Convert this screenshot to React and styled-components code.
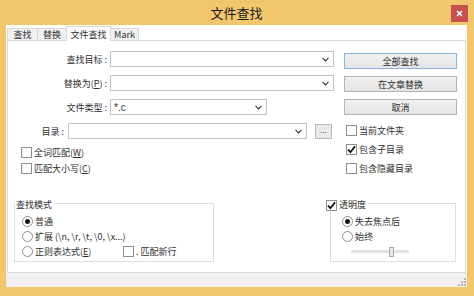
import React from 'react';
import styled, { createGlobalStyle } from 'styled-components';

const GlobalStyle = createGlobalStyle`
    html, body {
        margin: 0;
        padding: 0;
    }
    body {
        font-family: "Noto Sans CJK SC", "Liberation Sans", sans-serif;
        font-size: 9px;
        color: #2e2e2e;
    }
    * {
        box-sizing: border-box;
    }
`

const Window = styled.div`
    width: 474px;
    height: 296px;
    display: flex;
    flex-direction: column;
    padding: 0 7px 9px 6px;
    background: #f2c66d;
`

const TitleBar = styled.div`
    height: 25px;
    display: grid;
    grid-template-columns: 1fr auto 1fr;
    align-items: start;
`

const Title = styled.div`
    grid-column: 2;
    font-size: 13px;
    line-height: 25px;
    color: #1a1a1a;
`

const CloseButton = styled.div`
    grid-column: 3;
    justify-self: end;
    margin: 5px -1px 0 0;
    width: 17px;
    height: 17px;
    display: flex;
    align-items: center;
    justify-content: center;
    background: #c75050;
`

const Client = styled.div`
    flex: 1;
    display: flex;
    flex-direction: column;
    background: #ffffff;
`

const TabStrip = styled.div`
    height: 15px;
    display: flex;
    align-items: flex-end;
    padding-left: 1px;
    position: relative;
    z-index: 1;
`

const Tab = styled.div`
    width: ${(props) => props.$w}px;
    height: ${(props) => (props.$active ? 15 : 12)}px;
    margin-bottom: ${(props) => (props.$active ? -1 : 0)}px;
    margin-left: ${(props) => (props.$first ? 0 : -1)}px;
    display: flex;
    align-items: center;
    justify-content: center;
    background: ${(props) => (props.$active ? '#ffffff' : '#f0f0f0')};
    border: 1px solid #d9d9d9;
    border-bottom: none;
    line-height: 11px;
`

const Panel = styled.div`
    height: 233px;
    margin: 0 1px;
    border: 1px solid #d9d9d9;
    display: flex;
    flex-direction: column;
`

const TopArea = styled.div`
    display: flex;
`

const LeftForm = styled.div`
    width: 326px;
    display: flex;
    flex-direction: column;
`

const FieldList = styled.div`
    display: flex;
    flex-direction: column;
    gap: 8px;
    padding-top: 10px;
`

const FieldRow = styled.div`
    height: 16px;
    display: flex;
    align-items: center;
`

const FieldLabel = styled.div`
    width: ${(props) => props.$w}px;
    padding-right: 1px;
    text-align: right;
    white-space: nowrap;
`

const Combo = styled.div`
    width: ${(props) => props.$w}px;
    height: 16px;
    margin-left: ${(props) => props.$gap}px;
    display: flex;
    align-items: center;
    padding-left: 3px;
    border: 1px solid #c4c4c4;
    background: #ffffff;
`

const ComboText = styled.span`
    flex: 1;
    font-family: "Liberation Sans", sans-serif;
    font-size: 10px;
`

const Chevron = styled.svg`
    margin-right: 4px;
    flex-shrink: 0;
`

const BrowseButton = styled.div`
    width: 17px;
    height: 15px;
    margin-left: 8px;
    display: flex;
    align-items: center;
    justify-content: center;
    padding-bottom: 3px;
    border: 1px solid #b9b9b9;
    background: #e9e9e9;
    color: #555;
    font-size: 8px;
`

const LeftChecks = styled.div`
    margin-top: 5px;
    padding-left: 13px;
    display: flex;
    flex-direction: column;
`

const RightCol = styled.div`
    width: 113px;
    margin-left: 10px;
    padding-top: 12px;
    display: flex;
    flex-direction: column;
`

const ButtonStack = styled.div`
    display: flex;
    flex-direction: column;
    gap: 7px;
`

const Button = styled.div`
    height: 16px;
    display: flex;
    align-items: center;
    justify-content: center;
    border: 1px solid ${(props) => (props.$default ? '#86b4e3' : '#b4b4b4')};
    background: linear-gradient(#f0f0f0, #e4e4e4);
`

const RightChecks = styled.div`
    margin-top: 6px;
    padding-left: 2px;
    display: flex;
    flex-direction: column;
`

const CheckRow = styled.div`
    height: ${(props) => props.$h}px;
    display: flex;
    align-items: center;
    gap: 2px;
    white-space: nowrap;
`

const Box = styled.div`
    width: 11px;
    height: 11px;
    flex-shrink: 0;
    display: flex;
    align-items: center;
    justify-content: center;
    border: 1px solid #8f8f8f;
    background: #ffffff;
`

const Circle = styled.div`
    width: 11px;
    height: 11px;
    flex-shrink: 0;
    display: flex;
    align-items: center;
    justify-content: center;
    border: 1px solid #8f8f8f;
    border-radius: 50%;
    background: #ffffff;
`

const Dot = styled.div`
    width: 5px;
    height: 5px;
    border-radius: 50%;
    background: #1a1a1a;
`

const BottomArea = styled.div`
    margin-top: auto;
    display: flex;
    align-items: flex-end;
    justify-content: space-between;
    padding: 0 9px 10px 6px;
`

const Group = styled.fieldset`
    width: ${(props) => props.$w}px;
    margin: 0;
    padding: 0 0 2px 0;
    border: 1px solid #dedede;
`

const Legend = styled.legend`
    padding: 4px 2px 0 1px;
    margin-left: ${(props) => props.$shift || 0}px;
    line-height: 12px;
    display: flex;
    align-items: center;
    gap: 2px;
`

const GroupBody = styled.div`
    margin-top: 3px;
    padding-left: ${(props) => props.$pad}px;
    display: flex;
    flex-direction: column;
`

const RadioRow = styled.div`
    height: 15px;
    display: flex;
    align-items: center;
    white-space: nowrap;
`

const RadioItem = styled.div`
    display: flex;
    align-items: center;
    gap: 2px;
    width: ${(props) => (props.$w ? `${props.$w}px` : 'auto')};
`

const Slider = styled.div`
    height: 15px;
    margin-left: 9px;
    display: flex;
    align-items: center;
`

const SliderLine = styled.div`
    width: ${(props) => props.$w}px;
    height: 3px;
    background: #e2e2e2;
`

const SliderThumb = styled.div`
    width: 5px;
    height: 10px;
    border: 1px solid #a9a9a9;
    background: #eaeaea;
`

const StatusBar = styled.div`
    flex: 1;
    display: flex;
    align-items: flex-end;
    justify-content: flex-end;
    background: #f0f0f0;
`

const ChevronIcon = () => (
    <Chevron width="7" height="5" viewBox="0 0 7 5">
        <path d="M0.5 0.8 L3.5 3.8 L6.5 0.8" fill="none" stroke="#3a3a3a" strokeWidth="1.2" />
    </Chevron>
)

const Checkbox = ({checked}) => (
    <Box>
        {checked && (
            <svg width="9" height="9" viewBox="0 0 9 9">
                <path d="M1 4.6 L3.4 7.2 L8 1.4" fill="none" stroke="#111" strokeWidth="1.7" />
            </svg>
        )}
    </Box>
)

const Radio = ({checked, children, w}) => (
    <RadioItem $w={w}>
        <Circle>{checked && <Dot />}</Circle>
        <span>{children}</span>
    </RadioItem>
)

const App = () => {
    return (
        <>
            <GlobalStyle />
            <Window>
                <TitleBar>
                    <Title>文件查找</Title>
                    <CloseButton>
                        <svg width="7" height="7" viewBox="0 0 7 7">
                            <path d="M1 1 L6 6 M6 1 L1 6" stroke="#ffffff" strokeWidth="1.6" />
                        </svg>
                    </CloseButton>
                </TitleBar>
                <Client>
                    <TabStrip>
                        <Tab $w={31} $first>查找</Tab>
                        <Tab $w={30}>替换</Tab>
                        <Tab $w={45} $active>文件查找</Tab>
                        <Tab $w={29}>Mark</Tab>
                    </TabStrip>
                    <Panel>
                        <TopArea>
                            <LeftForm>
                                <FieldList>
                                    <FieldRow>
                                        <FieldLabel $w={100}>查找目标 :</FieldLabel>
                                        <Combo $w={224} $gap={2}>
                                            <ComboText />
                                            <ChevronIcon />
                                        </Combo>
                                    </FieldRow>
                                    <FieldRow>
                                        <FieldLabel $w={100}>替换为(<u>P</u>) :</FieldLabel>
                                        <Combo $w={224} $gap={2}>
                                            <ComboText />
                                            <ChevronIcon />
                                        </Combo>
                                    </FieldRow>
                                    <FieldRow>
                                        <FieldLabel $w={100}>文件类型 :</FieldLabel>
                                        <Combo $w={157} $gap={2}>
                                            <ComboText>*.c</ComboText>
                                            <ChevronIcon />
                                        </Combo>
                                    </FieldRow>
                                    <FieldRow>
                                        <FieldLabel $w={57}>目录 :</FieldLabel>
                                        <Combo $w={239} $gap={3}>
                                            <ComboText />
                                            <ChevronIcon />
                                        </Combo>
                                        <BrowseButton>...</BrowseButton>
                                    </FieldRow>
                                </FieldList>
                                <LeftChecks>
                                    <CheckRow $h={16}>
                                        <Checkbox />
                                        <span>全词匹配(<u>W</u>)</span>
                                    </CheckRow>
                                    <CheckRow $h={16}>
                                        <Checkbox />
                                        <span>匹配大小写(<u>C</u>)</span>
                                    </CheckRow>
                                </LeftChecks>
                            </LeftForm>
                            <RightCol>
                                <ButtonStack>
                                    <Button $default>全部查找</Button>
                                    <Button>在文章替换</Button>
                                    <Button>取消</Button>
                                </ButtonStack>
                                <RightChecks>
                                    <CheckRow $h={19}>
                                        <Checkbox />
                                        <span>当前文件夹</span>
                                    </CheckRow>
                                    <CheckRow $h={19}>
                                        <Checkbox checked />
                                        <span>包含子目录</span>
                                    </CheckRow>
                                    <CheckRow $h={19}>
                                        <Checkbox />
                                        <span>包含隐藏目录</span>
                                    </CheckRow>
                                </RightChecks>
                            </RightCol>
                        </TopArea>
                        <BottomArea>
                            <Group $w={200}>
                                <Legend>查找模式</Legend>
                                <GroupBody $pad={7}>
                                    <RadioRow>
                                        <Radio checked>普通</Radio>
                                    </RadioRow>
                                    <RadioRow>
                                        <Radio>扩展 (\n, \r, \t, \0, \x...)</Radio>
                                    </RadioRow>
                                    <RadioRow>
                                        <Radio w={101}>正则表达式(<u>E</u>)</Radio>
                                        <CheckRow $h={15}>
                                            <Checkbox />
                                            <span>. 匹配新行</span>
                                        </CheckRow>
                                    </RadioRow>
                                </GroupBody>
                            </Group>
                            <Group $w={126}>
                                <Legend $shift={-6}>
                                    <Checkbox checked />
                                    <span>透明度</span>
                                </Legend>
                                <GroupBody $pad={11}>
                                    <RadioRow>
                                        <Radio checked>失去焦点后</Radio>
                                    </RadioRow>
                                    <RadioRow>
                                        <Radio>始终</Radio>
                                    </RadioRow>
                                    <Slider>
                                        <SliderLine $w={38} />
                                        <SliderThumb />
                                        <SliderLine $w={15} />
                                    </Slider>
                                </GroupBody>
                            </Group>
                        </BottomArea>
                    </Panel>
                    <StatusBar>
                        <svg width="10" height="10" viewBox="0 0 10 10">
                            <g fill="#b5b5b5">
                                <rect x="7" y="1" width="2" height="2" />
                                <rect x="4" y="4" width="2" height="2" />
                                <rect x="7" y="4" width="2" height="2" />
                                <rect x="1" y="7" width="2" height="2" />
                                <rect x="4" y="7" width="2" height="2" />
                                <rect x="7" y="7" width="2" height="2" />
                            </g>
                        </svg>
                    </StatusBar>
                </Client>
            </Window>
        </>
    );
}

export default App;
